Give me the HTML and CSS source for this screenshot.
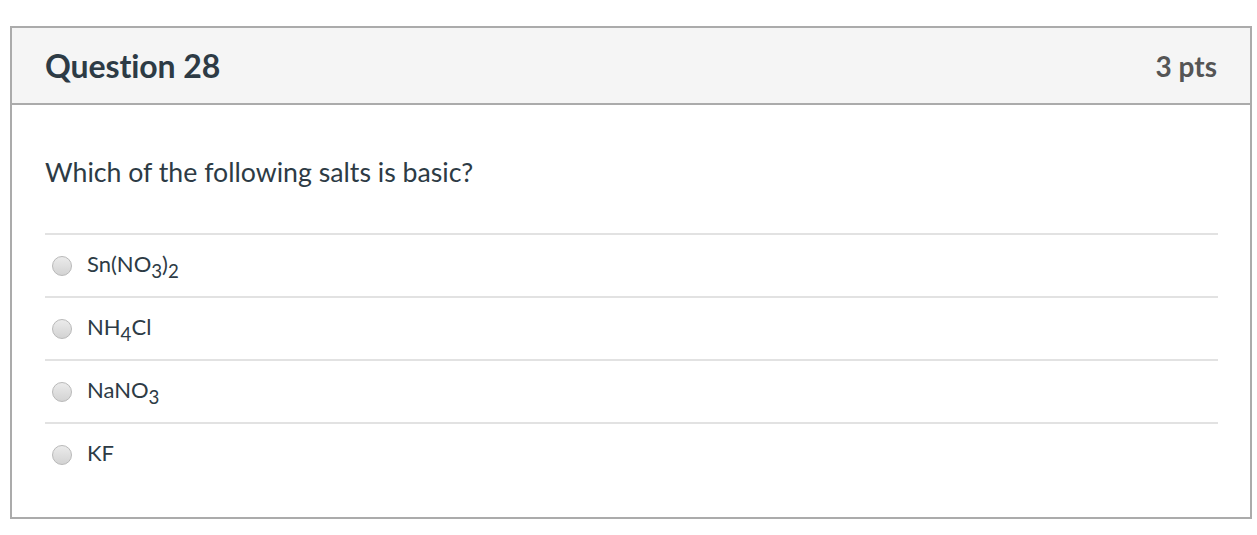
FILE: index.html
```html
<!DOCTYPE html>
<html>
<head>
<meta charset="utf-8">
<link rel="stylesheet" href="styles.css">
</head>
<body>
<div class="question">
  <div class="q-header">
    <h2 class="q-title">Question 28</h2>
    <div class="q-pts">3 pts</div>
  </div>
  <div class="q-body">
    <p class="q-text">Which of the following salts is basic?</p>
    <div class="answers">
      <div class="answer"><span class="radio"></span><span class="label">Sn(NO<sub>3</sub>)<sub>2</sub></span></div>
      <div class="answer"><span class="radio"></span><span class="label">NH<sub>4</sub>Cl</span></div>
      <div class="answer"><span class="radio"></span><span class="label">NaNO<sub>3</sub></span></div>
      <div class="answer"><span class="radio"></span><span class="label">KF</span></div>
    </div>
  </div>
</div>
</body>
</html>
```

FILE: styles.css
```css
html, body {
  margin: 0;
  padding: 0;
  background: #fff;
}
body {
  font-family: Lato, "Liberation Sans", sans-serif;
  color: #2d3b45;
  padding: 26px 5px 0 10px;
}
.question {
  width: 1242px;
  height: 493px;
  box-sizing: border-box;
  border: 2px solid #ababab;
  display: flex;
  flex-direction: column;
}
.q-header {
  height: 77px;
  box-sizing: border-box;
  background: #f5f5f5;
  border-bottom: 2px solid #ababab;
  display: flex;
  align-items: center;
  justify-content: space-between;
  padding: 0 33px 0 33px;
}
.q-title {
  margin: 0;
  font-size: 32px;
  font-weight: 700;
  color: #2d3b45;
  letter-spacing: -0.1px;
}
.q-pts {
  font-size: 28px;
  font-weight: 700;
  color: #555;
}
.q-body {
  padding: 0 32px 0 33px;
}
.q-text {
  margin: 52px 0 0 0;
  font-size: 26.7px;
  line-height: 30px;
}
.answers {
  margin-top: 46px;
}
.answer {
  border-top: 2px solid #e2e2e2;
  height: 61px;
  display: flex;
  align-items: center;
  padding-left: 7px;
}
.radio {
  width: 20px;
  height: 20px;
  box-sizing: border-box;
  border-radius: 50%;
  border: 1px solid #b9b9b9;
  background: linear-gradient(#ebebeb, #d3d3d3);
  margin-right: 15px;
  flex: none;
}
.label {
  font-size: 22px;
  line-height: 1;
  color: #2d3b45;
  margin-top: -4px;
}
.label sub {
  font-size: 0.85em;
  vertical-align: -0.3em;
  line-height: 0;
}
```
